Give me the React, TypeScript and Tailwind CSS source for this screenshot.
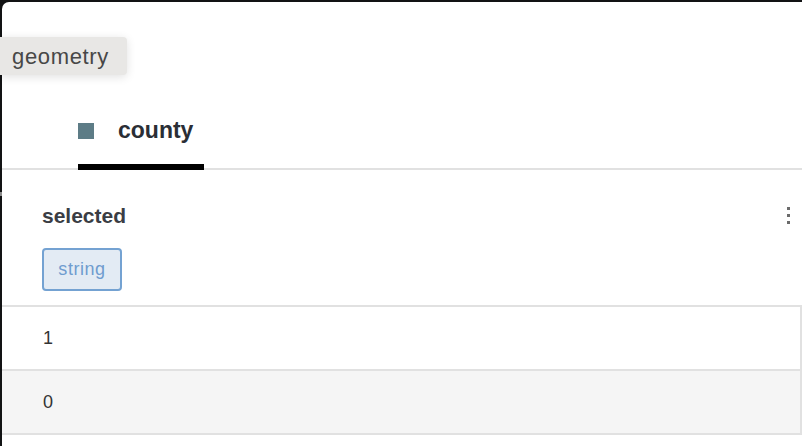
import React from 'react';

const rows = ['1', '0'];

export default function App() {
  return (
    <div
      className="relative w-[802px] h-[446px] overflow-hidden bg-[#121314] pt-[2px] pl-[2px]"
      style={{ fontFamily: '"Liberation Sans", Arial, sans-serif' }}
    >
      <div className="flex h-full flex-col rounded-tl-[7px] bg-white">
        {/* layer tabs */}
        <div className="flex h-[168px] shrink-0 items-end border-b-2 border-[#e1e1e1] pl-[76px]">
          <div className="flex flex-col">
            <div className="flex items-center gap-[24px] pb-[22px]">
              <span className="h-[16px] w-[16px] bg-[#5d7c86]" />
              <span className="text-[23px] font-bold leading-none text-[#2a2e35]">county</span>
            </div>
            <div className="h-[6px] w-[126px] -mb-[2px] bg-black" />
          </div>
        </div>

        {/* field header */}
        <div className="flex h-[137px] shrink-0 flex-col border-b-2 border-[#e1e1e1] pl-[40px] pr-[12px] pt-[35px]">
          <div className="flex items-center justify-between">
            <span className="text-[21px] font-bold leading-none text-[#3a3d44]">selected</span>
            <div className="flex flex-col gap-[4px]">
              <span className="h-[3px] w-[3px] bg-[#6b6b6b]" />
              <span className="h-[3px] w-[3px] bg-[#6b6b6b]" />
              <span className="h-[3px] w-[3px] bg-[#6b6b6b]" />
            </div>
          </div>
          <div className="mt-[22px] flex h-[43px] w-[80px] items-center justify-center rounded-[4px] border-2 border-[#74a2d2] bg-[#e3ebf4] text-[18px] tracking-[0.03em] text-[#6f9ccf]">
            string
          </div>
        </div>

        {/* values */}
        <div className="border-r-2 border-[#e1e1e1]">
          {rows.map((v, i) => (
            <div
              key={v}
              className={`flex h-[64px] items-center border-b-2 border-[#e1e1e1] pl-[41px] text-[18px] text-[#333] ${
                i % 2 === 1 ? 'bg-[#f5f5f5]' : 'bg-white'
              }`}
            >
              {v}
            </div>
          ))}
        </div>
      </div>

      {/* tooltip */}
      <div className="absolute left-0 top-[37px] flex h-[38px] w-[127px] items-center rounded-r-[4px] bg-[#e8e7e5] pl-[12px] text-[22px] tracking-[0.03em] text-[#474747] shadow-[0_2px_10px_rgba(0,0,0,0.12)]">
        geometry
      </div>

      <div className="absolute left-0 top-[192px] h-[4px] w-[2px] bg-[#8a8a8a]" />
    </div>
  );
}
